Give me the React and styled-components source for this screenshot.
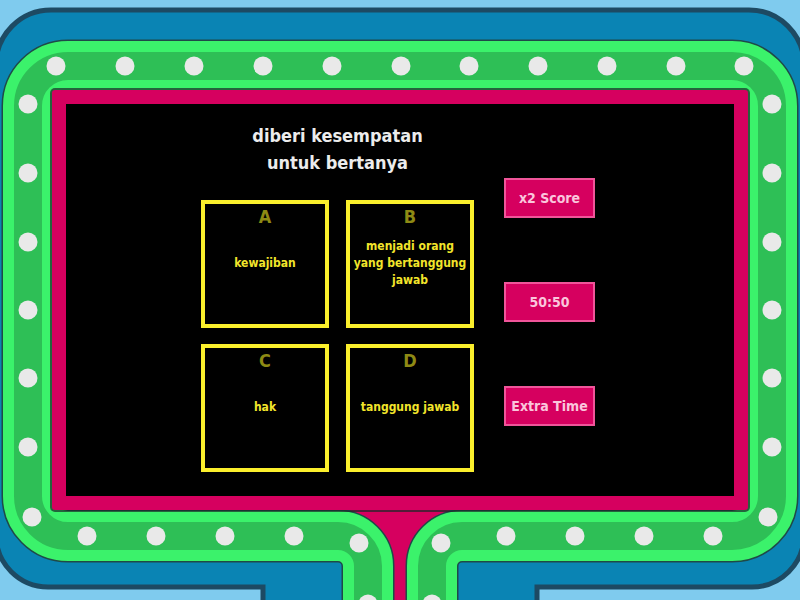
import React from "react";
import styled, { createGlobalStyle } from "styled-components";

const GlobalStyle = createGlobalStyle`
  html, body {
    margin: 0;
    padding: 0;
  }
  body {
    background: #7fcbee;
    font-family: "DejaVu Sans Condensed", "DejaVu Sans", "Liberation Sans", sans-serif;
  }
`;

const Stage = styled.div`
  position: relative;
  width: 800px;
  height: 600px;
  overflow: hidden;
  box-sizing: border-box;
  padding: 90px 52px 0;
  background: #7fcbee;
`;

const FrameArt = styled.svg`
  position: absolute;
  left: 0;
  top: 0;
  width: 800px;
  height: 600px;
  z-index: 0;
`;

const Screen = styled.div`
  position: relative;
  z-index: 1;
  width: 696px;
  height: 420px;
  box-sizing: border-box;
  border: 14px solid #d6005f;
  border-radius: 3px;
  background: #000;
  box-shadow: 0 0 0 2px rgba(25, 40, 40, 0.7);
  padding: 18px 0 0 135px;
  display: flex;
  gap: 30px;
`;

const QuestionColumn = styled.div`
  width: 273px;
  display: flex;
  flex-direction: column;
  align-items: center;
`;

const Question = styled.div`
  max-width: 200px;
  text-align: center;
  color: #ececec;
  font-size: 18px;
  font-weight: 700;
  font-stretch: condensed;
  line-height: 27px;
  margin-bottom: 24px;
`;

const Grid = styled.div`
  display: grid;
  grid-template-columns: repeat(2, 128px);
  gap: 16px 17px;
`;

const Card = styled.div`
  width: 128px;
  height: 128px;
  box-sizing: border-box;
  border: 4px solid #fbef2c;
  display: flex;
  flex-direction: column;
  align-items: center;
`;

const Letter = styled.div`
  margin-top: 2px;
  color: #8e8a14;
  font-size: 18px;
  font-weight: 700;
  font-stretch: condensed;
  line-height: 22px;
`;

const Answer = styled.div`
  margin-top: 6px;
  height: 58px;
  padding: 0;
  display: flex;
  align-items: center;
  justify-content: center;
  text-align: center;
  color: #f2e52b;
  font-size: 12px;
  font-weight: 700;
  font-stretch: condensed;
  line-height: 17px;
`;

const PowerColumn = styled.div`
  display: flex;
  flex-direction: column;
  gap: 64px;
  margin-top: 56px;
`;

const PowerButton = styled.div`
  width: 91px;
  height: 40px;
  box-sizing: border-box;
  border: 2px solid #f0559a;
  background: #d6005f;
  color: #fac6dc;
  display: flex;
  align-items: center;
  justify-content: center;
  font-size: 14px;
  font-weight: 700;
  font-stretch: condensed;
`;

const ringPath =
  "M 368 640 V 566 A 30 30 0 0 0 338 536 H 68 A 40 40 0 0 1 28 496 V 106 A 40 40 0 0 1 68 66 H 732 A 40 40 0 0 1 772 106 V 496 A 40 40 0 0 1 732 536 H 462 A 30 30 0 0 0 432 566 V 640";

const cabinetPath =
  "M 51 10 H 749 A 55 55 0 0 1 804 65 V 535 A 52 52 0 0 1 752 587 H 537 V 640 H 263 V 587 H 48 A 52 52 0 0 1 -4 535 V 65 A 55 55 0 0 1 51 10 Z";

const dots = [
  ...[56, 125, 194, 263, 332, 401, 469, 538, 607, 676, 744].map((x) => [x, 66]),
  ...[104, 173, 242, 310, 378, 447].map((y) => [28, y]),
  ...[104, 173, 242, 310, 378, 447].map((y) => [772, y]),
  [32, 517],
  [87, 536],
  [156, 536],
  [225, 536],
  [294, 536],
  [359, 543],
  [441, 543],
  [506, 536],
  [575, 536],
  [644, 536],
  [713, 536],
  [768, 517],
  [368, 604],
  [432, 604],
];

const answers = [
  { key: "A", text: "kewajiban" },
  { key: "B", text: "menjadi orang yang bertanggung jawab" },
  { key: "C", text: "hak" },
  { key: "D", text: "tanggung jawab" },
];

const powers = ["x2 Score", "50:50", "Extra Time"];

export default function App() {
  return (
    <>
      <GlobalStyle />
      <Stage>
        <FrameArt viewBox="0 0 800 600">
          <path d={cabinetPath} fill="#0a84b4" stroke="#1d4a63" strokeWidth="5" />
          <rect x="350" y="480" width="100" height="140" fill="#d6005f" />
          <path d={ringPath} fill="none" stroke="#1f4a48" strokeWidth="53" />
          <path d={ringPath} fill="none" stroke="#3bf26b" strokeWidth="50" />
          <path d={ringPath} fill="none" stroke="#2ebf56" strokeWidth="28" />
          {dots.map(([x, y], i) => (
            <circle key={i} cx={x} cy={y} r="9.5" fill="#e9e9e9" />
          ))}
        </FrameArt>
        <Screen>
          <QuestionColumn>
            <Question>diberi kesempatan untuk bertanya</Question>
            <Grid>
              {answers.map((a) => (
                <Card key={a.key}>
                  <Letter>{a.key}</Letter>
                  <Answer>{a.text}</Answer>
                </Card>
              ))}
            </Grid>
          </QuestionColumn>
          <PowerColumn>
            {powers.map((p) => (
              <PowerButton key={p}>{p}</PowerButton>
            ))}
          </PowerColumn>
        </Screen>
      </Stage>
    </>
  );
}
